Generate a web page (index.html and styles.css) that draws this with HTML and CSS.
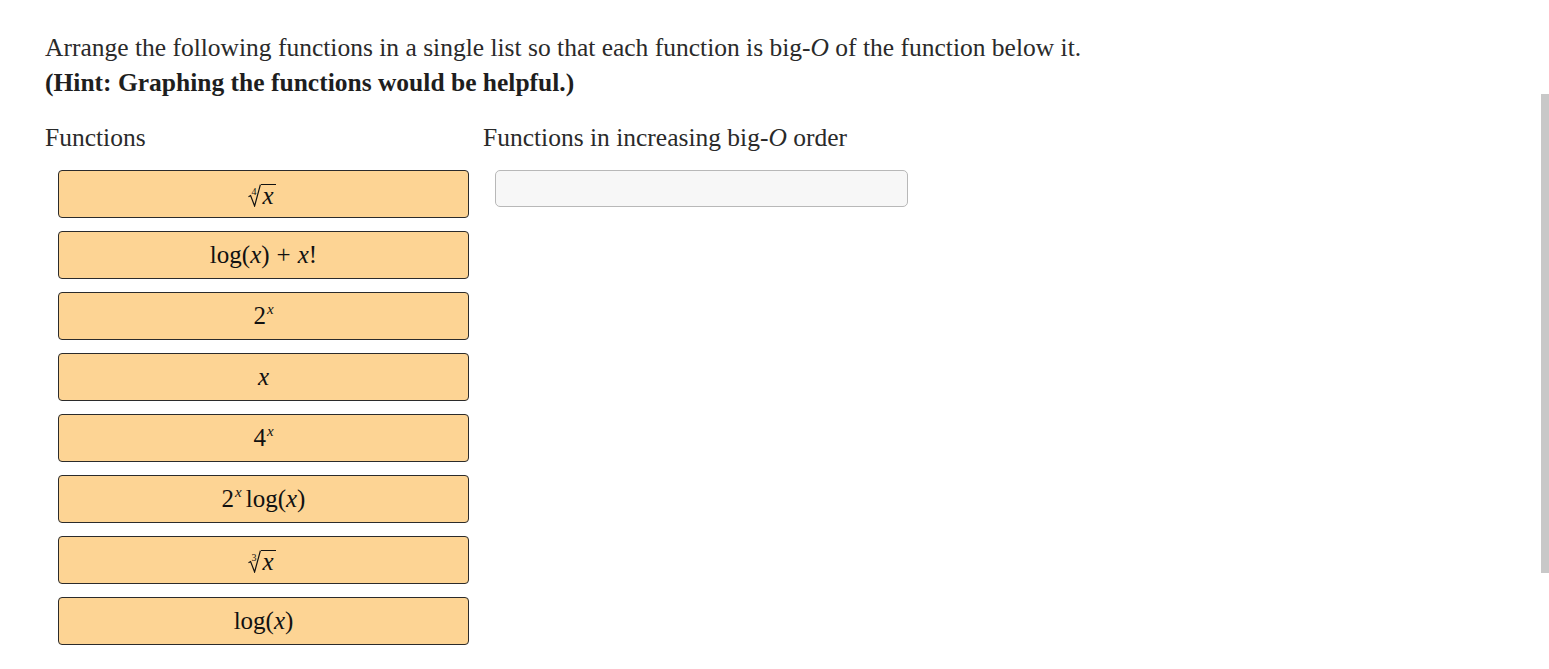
FILE: index.html
```html
<!DOCTYPE html>
<html>
<head>
<meta charset="utf-8">
<link rel="stylesheet" href="styles.css">
</head>
<body>
<div class="page">
  <div class="prompt">
    <p>Arrange the following functions in a single list so that each function is big-<i>O</i> of the function below it.</p>
    <p class="hint">(Hint: Graphing the functions would be helpful.)</p>
  </div>
  <div class="columns">
    <div class="col">
      <div class="col-title">Functions</div>
      <div class="list">
        <div class="item"><span class="m"><span class="root"><span class="idx">4</span><svg class="rad" width="13" height="23" viewBox="0 0 13 23"><path d="M0.5 12.8 L2.6 11.6 L6.6 22 L12.4 0.6" fill="none" stroke="#111" stroke-width="1.2"/></svg><span class="under"><i>x</i></span></span></span></div>
        <div class="item"><span class="m">log(<i>x</i>)<span class="op">+</span><i>x</i>!</span></div>
        <div class="item"><span class="m">2<sup class="exp"><i>x</i></sup></span></div>
        <div class="item"><span class="m"><i>x</i></span></div>
        <div class="item"><span class="m">4<sup class="exp"><i>x</i></sup></span></div>
        <div class="item"><span class="m">2<sup class="exp"><i>x</i></sup><span class="thin"></span>log(<i>x</i>)</span></div>
        <div class="item"><span class="m"><span class="root"><span class="idx">3</span><svg class="rad" width="13" height="23" viewBox="0 0 13 23"><path d="M0.5 12.8 L2.6 11.6 L6.6 22 L12.4 0.6" fill="none" stroke="#111" stroke-width="1.2"/></svg><span class="under"><i>x</i></span></span></span></div>
        <div class="item"><span class="m">log(<i>x</i>)</span></div>
      </div>
    </div>
    <div class="col">
      <div class="col-title">Functions in increasing big-<i>O</i> order</div>
      <div class="list">
        <div class="drop"></div>
      </div>
    </div>
  </div>
</div>
<div class="scrollbar"></div>
</body>
</html>
```
FILE: styles.css
```css
html, body {
  margin: 0;
  padding: 0;
  background: #ffffff;
}
body {
  font-family: "Liberation Serif", "Times New Roman", serif;
  color: #2a2a2a;
}
.page {
  padding: 30px 0 0 45px;
}
.prompt p {
  margin: 0;
  font-size: 25.5px;
  line-height: 35px;
}
.prompt .hint {
  font-weight: bold;
  color: #1e1e1e;
}
.columns {
  display: flex;
  margin-top: 23px;
}
.col {
  width: 438px;
}
.col-title {
  font-size: 25.5px;
  line-height: 30px;
  height: 30px;
}
.list {
  display: flex;
  flex-direction: column;
  gap: 13px;
  padding: 17px 0 0 13px;
}
.item {
  width: 409px;
  height: 46px;
  background: #fdd494;
  border: 1px solid #2b2b2b;
  border-radius: 4px;
  display: flex;
  align-items: center;
  justify-content: center;
}
.m {
  font-family: "Liberation Serif", "Times New Roman", serif;
  font-size: 25px;
  color: #111;
  white-space: nowrap;
  display: inline-flex;
  align-items: baseline;
}
.m i {
  font-style: italic;
}
.op {
  padding: 0 7px;
}
.thin {
  display: inline-block;
  width: 4px;
}
.exp {
  font-size: 15px;
  position: relative;
  top: -10px;
  padding-left: 1px;
}
.root {
  display: inline-flex;
  align-items: flex-start;
  margin-top: 2px;
}
.idx {
  font-size: 10px;
  line-height: 10px;
  margin-top: 3px;
  margin-right: -8px;
}
.rad {
  display: block;
}
.under {
  border-top: 1.2px solid #111;
  line-height: 21px;
  padding: 0 2px 0 1px;
}
.drop {
  width: 411px;
  height: 35px;
  background: #f7f7f7;
  border: 1px solid #b8b8b8;
  border-radius: 5px;
  margin-left: -1px;
}
.scrollbar {
  position: absolute;
  left: 1541px;
  top: 94px;
  width: 8px;
  height: 479px;
  background: #c8c8c8;
}
```
